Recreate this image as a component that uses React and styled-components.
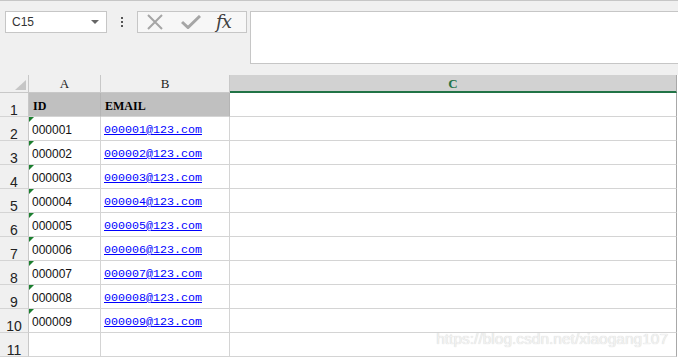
import styled, { createGlobalStyle } from "styled-components";

const GlobalStyle = createGlobalStyle`
  html, body {
    margin: 0;
    padding: 0;
    background: #ffffff;
    font-family: "Liberation Sans", Arial, sans-serif;
  }
`;

const Window = styled.div`
  width: 678px;
  height: 357px;
  overflow: hidden;
  position: relative;
  background: #ffffff;
`;

const Toolbar = styled.div`
  height: 75px;
  box-sizing: border-box;
  border-top: 1px solid #c6c6c6;
  background: #f0f0f0;
  display: flex;
  align-items: flex-start;
  padding: 10px 0 0 5px;
`;

const NameBox = styled.div`
  width: 102px;
  height: 22px;
  box-sizing: border-box;
  border: 1px solid #c6c6c6;
  background: #ffffff;
  display: flex;
  align-items: center;
  justify-content: space-between;
  padding: 0 7px 0 6px;
  font-size: 12px;
  color: #333;
`;

const Caret = styled.span`
  width: 0;
  height: 0;
  border-left: 4px solid transparent;
  border-right: 4px solid transparent;
  border-top: 4px solid #666;
`;

const Dots = styled.div`
  width: 30px;
  height: 22px;
  display: flex;
  flex-direction: column;
  align-items: center;
  justify-content: center;
  gap: 2px;
  span {
    width: 2px;
    height: 2px;
    background: #555;
  }
`;

const FxBox = styled.div`
  width: 110px;
  height: 22px;
  box-sizing: border-box;
  border: 1px solid #c6c6c6;
  background: #f7f7f7;
  display: flex;
  align-items: center;
  padding-left: 9px;
  gap: 18px;
`;

const FxText = styled.span`
  font-family: "DejaVu Serif", "Liberation Serif", serif;
  font-style: italic;
  font-size: 18px;
  color: #404040;
  margin-left: -3px;
  line-height: 1;
  margin-top: -1px;
  letter-spacing: -1px;
`;

const FormulaBar = styled.div`
  flex: 1;
  margin-left: 3px;
  height: 53px;
  box-sizing: border-box;
  border: 1px solid #c6c6c6;
  border-right: none;
  background: #ffffff;
`;

const Sheet = styled.div`
  display: grid;
  grid-template-columns: 29px 72px 129px 447px;
  grid-template-rows: 18px repeat(11, 24px);
  width: 677px;
`;

const Corner = styled.div`
  background: #f0f0f0;
  box-sizing: border-box;
  border-right: 1px solid #c8c8c8;
  border-bottom: 1px solid #c8c8c8;
  position: relative;
  svg {
    position: absolute;
    right: 2px;
    bottom: 2px;
  }
`;

const ColHead = styled.div`
  box-sizing: border-box;
  background: ${(p) => (p.$active ? "#d2d2d2" : "#f0f0f0")};
  border-right: 1px solid ${(p) => (p.$last ? "#a8a8a8" : "#c8c8c8")};
  border-bottom: ${(p) => (p.$active ? "2px solid #217346" : "1px solid #c8c8c8")};
  display: flex;
  align-items: center;
  justify-content: center;
  font-family: "Liberation Serif", "Times New Roman", serif;
  font-size: 13px;
  font-weight: ${(p) => (p.$active ? "bold" : "normal")};
  color: ${(p) => (p.$active ? "#217346" : "#222")};
  padding-top: 1px;
`;

const RowHead = styled.div`
  box-sizing: border-box;
  background: #f0f0f0;
  border-right: 1px solid #c8c8c8;
  border-bottom: 1px solid #d4d4d4;
  display: flex;
  align-items: flex-end;
  justify-content: center;
  font-size: 14px;
  line-height: 1;
  color: #222;
  span {
    margin-bottom: -1px;
  }
`;

const Cell = styled.div`
  box-sizing: border-box;
  position: relative;
  background: ${(p) => (p.$header ? "#c0c0c0" : "#ffffff")};
  border-right: 1px solid ${(p) => (p.$header ? "#b4b4b4" : p.$last ? "#a8a8a8" : "#d4d4d4")};
  border-bottom: 1px solid #d4d4d4;
  display: flex;
  align-items: flex-end;
  padding: 0 0 3px 3px;
  font-size: 12px;
  color: #111;
  white-space: nowrap;
`;

const HeadText = styled.span`
  font-family: "Liberation Serif", "Times New Roman", serif;
  font-weight: bold;
  font-size: 12px;
  color: #000;
  margin-bottom: -1px;
  margin-left: 1px;
`;

const Link = styled.span`
  font-family: "Liberation Mono", "Courier New", monospace;
  font-size: 11.67px;
  color: #0000ff;
  text-decoration: underline;
`;

const Flag = styled.span`
  position: absolute;
  top: 0;
  left: 0;
  width: 0;
  height: 0;
  border-top: 5px solid #1b7f2f;
  border-right: 5px solid transparent;
`;

const Watermark = styled.div`
  position: absolute;
  right: 10px;
  bottom: 9px;
  font-size: 15.5px;
  color: #f2f2f2;
  text-shadow: 0 0 1px #c8c8c8;
  pointer-events: none;
`;

const ids = ["000001", "000002", "000003", "000004", "000005", "000006", "000007", "000008", "000009"];

function Icons() {
  return (
    <>
      <svg width="16" height="16" viewBox="0 0 16 16">
        <path d="M1 1L15 15M15 1L1 15" stroke="#a6a6a6" strokeWidth="2" fill="none" />
      </svg>
      <svg width="20" height="14" viewBox="0 0 20 14">
        <path d="M1 7L7 12.5L19 1" stroke="#a6a6a6" strokeWidth="3" fill="none" />
      </svg>
    </>
  );
}

export default function App() {
  return (
    <Window>
      <GlobalStyle />
      <Toolbar>
        <NameBox>
          <span>C15</span>
          <Caret />
        </NameBox>
        <Dots>
          <span />
          <span />
          <span />
        </Dots>
        <FxBox>
          <Icons />
          <FxText>fx</FxText>
        </FxBox>
        <FormulaBar />
      </Toolbar>
      <Sheet>
        <Corner>
          <svg width="11" height="10" viewBox="0 0 11 10">
            <path d="M11 0L11 10L0 10Z" fill="#c6c6c6" />
          </svg>
        </Corner>
        <ColHead>A</ColHead>
        <ColHead>B</ColHead>
        <ColHead $active $last>C</ColHead>

        <RowHead><span>1</span></RowHead>
        <Cell $header><HeadText>ID</HeadText></Cell>
        <Cell $header><HeadText>EMAIL</HeadText></Cell>
        <Cell $last />

        {ids.map((id, i) => (
          <>
            <RowHead key={"r" + id}><span>{i + 2}</span></RowHead>
            <Cell key={"a" + id}>
              <Flag />
              {id}
            </Cell>
            <Cell key={"b" + id}>
              <Link>{id}@123.com</Link>
            </Cell>
            <Cell key={"c" + id} $last />
          </>
        ))}

        <RowHead><span>11</span></RowHead>
        <Cell />
        <Cell />
        <Cell $last />
      </Sheet>
      <Watermark>https://blog.csdn.net/xiaogang107</Watermark>
    </Window>
  );
}
